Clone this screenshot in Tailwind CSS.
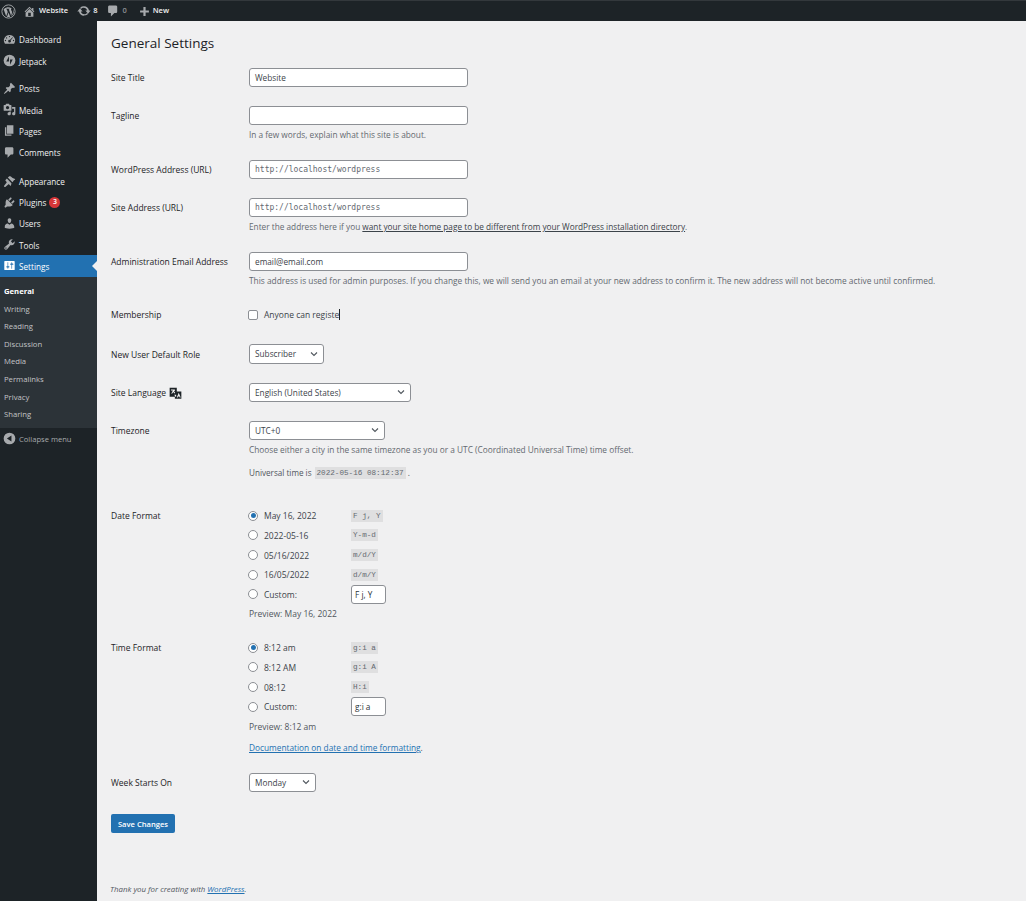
<!DOCTYPE html>
<html><head><meta charset="utf-8"><title>General Settings</title>
<script src="https://cdn.jsdelivr.net/npm/@tailwindcss/browser@4"></script></head>
<body class="bg-[#f0f0f1] font-['Open_Sans','Noto_Sans',sans-serif] text-[8.5px] text-[#3c434a] overflow-hidden">
<div class="relative w-[1026px] h-[901px] overflow-hidden">
<header class="flex h-[21px] items-center bg-[#1d2327] text-[#f0f0f1] border-t border-[#33383c] text-[7.5px] font-semibold">
  <svg class="ml-[1px] w-[15px] h-[15px]" viewBox="0 0 20 20"><circle cx="10" cy="10" r="8.8" fill="none" stroke="#a7aaad" stroke-width="1.2"/><path fill="#a7aaad" d="M3.5 7l3.4 9.3L9 10.5 7.7 7H6.8V6.3h4.6V7h-1l3 8.7 1-3.2c.5-1.6.2-2.4-.4-3.4-.5-.8-.9-1.5-.5-2.3.2-.4.5-.6.8-.7A7.400 7.400 0 0 0 3.500 7zM10 11.300 8 17.200a7.300 7.300 0 0 0 4.200-.1zM16.300 6.600c.5 2.300-.1 4.200-.9 6.400l-1.800 3.500c3-1.900 4.300-6.300 2.700-9.900z"/></svg>
  <svg class="ml-[7px] w-[13px] h-[13px]" viewBox="0 0 20 20"><path fill="#a7aaad" d="M16 8.500l1.530 1.530-1.060 1.060L10 4.620l-6.470 6.470-1.060-1.060L10 2.500l4 4v-2h2v4zm-6-2.460l6 5.990V18H4v-5.970zM12 17v-5H8v5h4z"/></svg>
  <span class="ml-[3px]">Website</span>
  <svg class="ml-[9px] w-[14px] h-[14px]" viewBox="0 0 20 20"><path fill="#a7aaad" d="M10.200 3.280c3.530 0 6.430 2.610 6.930 6h2.370l-3.750 4.500-3.750-4.500h2.580c-.47-2.280-2.500-4-4.930-4-1.600 0-3.020.75-3.940 1.910L4.600 5.280a7.040 7.040 0 0 1 5.600-2zM9.800 16.720c-3.530 0-6.430-2.610-6.930-6H.5l3.750-4.500 3.750 4.500H5.420c.47 2.280 2.500 4 4.930 4 1.600 0 3.020-.75 3.940-1.910l1.510 1.410a7.040 7.040 0 0 1-5.600 2z"/></svg>
  <span class="ml-[2px]">8</span>
  <svg class="ml-[9px] w-[14px] h-[14px]" viewBox="0 0 20 20"><path fill="#a7aaad" d="M5 2h9c1.100 0 2 .9 2 2v7c0 1.100-.9 2-2 2h-2l-5 5v-5H5c-1.100 0-2-.9-2-2V4c0-1.100.9-2 2-2z"/></svg>
  <span class="ml-[2px] text-[#8c8f94]">0</span>
  <svg class="ml-[12px] w-[11px] h-[11px]" viewBox="0 0 20 20"><path fill="#a7aaad" d="M8 2h4v6h6v4h-6v6H8v-6H2V8h6z"/></svg>
  <span class="ml-[3px]">New</span>
</header>
<div class="flex h-[880px]">
<nav class="w-[97px] shrink-0 bg-[#1d2327] text-[#f0f0f1] text-[8.2px] flex flex-col">
  <div class="flex items-center h-[21.2px] mt-[8px] pl-[3px] gap-[3px]"><svg class="w-[13px] h-[13px]" viewBox="0 0 20 20"><path fill="#a7aaad" fill-rule="evenodd" d="M10 3a8.500 8.500 0 0 0-7 13.500h14A8.500 8.500 0 0 0 10 3zM10 4.500a1 1 0 1 1 0 2 1 1 0 0 1 0-2zM5.500 6.500a1 1 0 1 1 0 2 1 1 0 0 1 0-2zM14.500 6.500l.8.600-3.600 4.400a2 2 0 1 1-1.100-.8zM3.800 10.500a1 1 0 1 1 0 2 1 1 0 0 1 0-2zM16.200 10.500a1 1 0 1 1 0 2 1 1 0 0 1 0-2z"/></svg><span class="pt-[2px]">Dashboard</span></div>
  <div class="flex items-center h-[21.2px] pl-[3px] gap-[3px]"><svg class="w-[13px] h-[13px]" viewBox="0 0 20 20"><circle cx="10" cy="10" r="9" fill="#a7aaad"/><path fill="#1d2327" d="M9.200 3.500v8H5zM10.800 8.500v8l4.200-8z"/></svg><span class="pt-[2px]">Jetpack</span></div>
  <div class="flex items-center h-[21.2px] mt-[6.5px] pl-[3px] gap-[3px]"><svg class="w-[13px] h-[13px]" viewBox="0 0 20 20"><path fill="#a7aaad" d="M10.440 3.020l1.820-1.820 6.360 6.350-1.830 1.820c-1.050-.68-2.480-.57-3.410.36l-.75.75c-.92.930-1.040 2.350-.35 3.410l-1.830 1.820-2.410-2.410-2.800 2.790c-.42.420-3.380 2.710-3.800 2.290s1.860-3.390 2.280-3.810l2.790-2.790L4.100 9.360l1.830-1.820c1.050.69 2.480.57 3.400-.36l.75-.75c.93-.92 1.050-2.350.36-3.410z"/></svg><span class="pt-[2px]">Posts</span></div>
  <div class="flex items-center h-[21.2px] pl-[3px] gap-[3px]"><svg class="w-[13px] h-[13px]" viewBox="0 0 20 20"><path fill="#a7aaad" d="M13 11V4c0-.55-.45-1-1-1h-1.670L9 1H5L3.670 3H2c-.55 0-1 .45-1 1v7c0 .55.45 1 1 1h10c.55 0 1-.45 1-1zM7 4.500c1.380 0 2.500 1.120 2.500 2.500S8.380 9.500 7 9.500 4.500 8.380 4.500 7 5.620 4.500 7 4.500zM14 6h5v10.500c0 1.380-1.120 2.500-2.500 2.500S14 17.880 14 16.500s1.120-2.500 2.500-2.500c.17 0 .34.020.5.050V9h-3V6zm-4 8.050V13h2v3.500c0 1.380-1.120 2.500-2.500 2.500S7 17.880 7 16.500 8.120 14 9.500 14c.17 0 .34.020.5.050z"/></svg><span class="pt-[2px]">Media</span></div>
  <div class="flex items-center h-[21.2px] pl-[3px] gap-[3px]"><svg class="w-[13px] h-[13px]" viewBox="0 0 20 20"><path fill="#a7aaad" d="M6 15V2h10v13H6zm-1 1h8v2H3V5h2v11z"/></svg><span class="pt-[2px]">Pages</span></div>
  <div class="flex items-center h-[21.2px] pl-[3px] gap-[3px]"><svg class="w-[13px] h-[13px]" viewBox="0 0 20 20"><path fill="#a7aaad" d="M5 2h9c1.100 0 2 .9 2 2v7c0 1.100-.9 2-2 2h-2l-5 5v-5H5c-1.100 0-2-.9-2-2V4c0-1.100.9-2 2-2z"/></svg><span class="pt-[2px]">Comments</span></div>
  <div class="flex items-center h-[21.2px] mt-[8px] pl-[3px] gap-[3px]"><svg class="w-[13px] h-[13px]" viewBox="0 0 20 20"><path fill="#a7aaad" d="M14.500 11L7.400 4l1.500-1.500c.5-.6 2.300-.5 3.500.3 1.200.8 1.400 1.300 2.700 2 1.200.7 1.900.8 2.700 1 .8.1 1.500 1 .5 1.500-1 .5-2 1.400-2 1.400zM13 12.500L6 5.500 3.900 7.600c-.4.4-.4 1 0 1.400l1.400 1.400c.5.5.5 1.100.1 1.500L2 16c-.6.7-.6 1.400 0 2s1.300.6 2 0l4-3.400c.4-.4 1-.4 1.500.1l1.400 1.400c.4.4 1 .4 1.400 0z"/></svg><span class="pt-[2px]">Appearance</span></div>
  <div class="flex items-center h-[21.2px] pl-[3px] gap-[3px]"><svg class="w-[13px] h-[13px]" viewBox="0 0 20 20"><path fill="#a7aaad" d="M13.110 4.360L9.870 7.600 8 5.730l3.240-3.240c.35-.34 1.050-.2 1.560.32.52.51.66 1.210.31 1.550zm-8 1.770l.91-1.120 9.010 9.010-1.190.84c-.71.71-2.630 1.160-3.820 1.160H6.140L4.900 17.260c-.59.59-1.540.59-2.120 0-.59-.58-.59-1.530 0-2.120l1.240-1.240v-3.880c0-1.130.4-3.190 1.090-3.890zm7.260 3.970l3.240-3.240c.34-.35 1.040-.21 1.550.31.52.51.66 1.210.31 1.550l-3.240 3.250z"/></svg><span class="pt-[2px]">Plugins</span><span class="flex items-center justify-center w-[11px] h-[11px] rounded-full bg-[#d63638] text-white text-[7px] font-semibold">3</span></div>
  <div class="flex items-center h-[21.2px] pl-[3px] gap-[3px]"><svg class="w-[13px] h-[13px]" viewBox="0 0 20 20"><path fill="#a7aaad" d="M10 9.250c-2.270 0-2.730-3.440-2.730-3.440C7 4.020 7.820 2 9.970 2c2.160 0 2.980 2.020 2.710 3.810 0 0-.41 3.440-2.680 3.440zm0 2.570L12.720 10c2.390 0 4.520 2.330 4.520 4.530v2.490s-3.650 1.130-7.240 1.130c-3.650 0-7.240-1.130-7.240-1.130v-2.490c0-2.250 1.940-4.480 4.470-4.480z"/></svg><span class="pt-[2px]">Users</span></div>
  <div class="flex items-center h-[21.2px] pl-[3px] gap-[3px]"><svg class="w-[13px] h-[13px]" viewBox="0 0 20 20"><path fill="#a7aaad" d="M16.680 9.770c-1.340 1.340-3.300 1.670-4.950.99l-5.410 6.520c-.99.99-2.590.99-3.580 0s-.99-2.590 0-3.580l6.520-5.420c-.68-1.650-.35-3.610.99-4.950 1.280-1.280 3.120-1.620 4.720-1.060l-2.890 2.890 2.820 2.820 2.860-2.870c.53 1.580.18 3.400-1.080 4.660zM3.810 16.210c.4.39 1.030.39 1.420 0 .4-.4.4-1.030 0-1.430-.39-.39-1.020-.39-1.420 0-.39.4-.39 1.030 0 1.430z"/></svg><span class="pt-[2px]">Tools</span></div>
  <div class="relative flex items-center h-[21.2px] pl-[3px] gap-[3px] bg-[#2271b1] text-white"><svg class="w-[13px] h-[13px]" viewBox="0 0 20 20"><path fill="#fff" d="M18 16V4c0-.55-.45-1-1-1H3c-.55 0-1 .45-1 1v12c0 .55.45 1 1 1h14c.55 0 1-.45 1-1zM8 11h1c.55 0 1 .45 1 1s-.45 1-1 1H8v1.500c0 .28-.22.5-.5.5s-.5-.22-.5-.5V13H6c-.55 0-1-.45-1-1s.45-1 1-1h1V5.500c0-.28.22-.5.5-.5s.5.22.5.5V11zm5-2h-1c-.55 0-1-.45-1-1s.45-1 1-1h1V5.500c0-.28.22-.5.5-.5s.5.22.5.5V7h1c.55 0 1 .45 1 1s-.45 1-1 1h-1v5.500c0 .28-.22.5-.5.5s-.5-.22-.5-.5V9z"/></svg><span class="pt-[2px]">Settings</span><span class="absolute right-0 top-[6px] w-0 h-0 border-y-[5px] border-y-transparent border-r-[5px] border-r-[#f0f0f1]"></span></div>
  <div class="flex flex-col bg-[#2c3338] text-[#c3c4c7] text-[7.7px] pt-[6.5px] pb-[4.5px] pl-[4px] leading-[17.600px]">
    <span class="font-bold text-white">General</span><span>Writing</span><span>Reading</span><span>Discussion</span><span>Media</span><span>Permalinks</span><span>Privacy</span><span>Sharing</span>
  </div>
  <div class="flex items-center h-[21px] pl-[3px] gap-[3px] text-[#a7aaad] text-[7.6px]"><svg class="w-[13px] h-[13px]" viewBox="0 0 20 20"><path fill="#a7aaad" fill-rule="evenodd" d="M10 1a9 9 0 1 1 0 18 9 9 0 0 1 0-18zM13 5.500l-7 4.500 7 4.500z"/></svg><span class="pt-[2px]">Collapse menu</span></div>
</nav>
<main class="relative flex-1 pl-[14px]">
  <h1 class="text-[13.500px] leading-[18px] text-[#1d2327] mt-[13px]">General Settings</h1>
  <form>
    <div class="flex h-[19px] items-center mt-[16px]"><label class="w-[138px] pt-[2px] text-[#1d2327]">Site Title</label><div class="w-[219px] h-[19px] bg-white border border-[#8c8f94] rounded-[3px] px-[5px] leading-[17px] text-[8.25px]">Website</div></div>
    <div class="flex h-[19px] items-center mt-[19px]"><label class="w-[138px] pt-[2px] text-[#1d2327]">Tagline</label><div class="w-[219px] h-[19px] bg-white border border-[#8c8f94] rounded-[3px]"></div></div>
    <p class="ml-[138px] mt-[3px] leading-[13px] text-[#646970] text-[8.3px]">In a few words, explain what this site is about.</p>
    <div class="flex h-[19px] items-center mt-[19px]"><label class="w-[138px] pt-[2px] text-[#1d2327]">WordPress Address (URL)</label><div class="w-[219px] h-[19px] bg-white border border-[#8c8f94] rounded-[3px] px-[5px] leading-[17px] font-['DejaVu_Sans_Mono',monospace] text-[8px] text-[#646970]">http://localhost/wordpress</div></div>
    <div class="flex h-[19px] items-center mt-[19px]"><label class="w-[138px] pt-[2px] text-[#1d2327]">Site Address (URL)</label><div class="w-[219px] h-[19px] bg-white border border-[#8c8f94] rounded-[3px] px-[5px] leading-[17px] font-['DejaVu_Sans_Mono',monospace] text-[8px] text-[#646970]">http://localhost/wordpress</div></div>
    <p class="ml-[138px] mt-[3px] leading-[13px] text-[#646970] text-[8.25px]">Enter the address here if you <a class="underline text-[#3c434a]">want your site home page to be different from your WordPress installation directory</a>.</p>
    <div class="flex h-[19px] items-center mt-[19px]"><label class="w-[138px] pt-[2px] text-[#1d2327]">Administration Email Address</label><div class="w-[219px] h-[19px] bg-white border border-[#8c8f94] rounded-[3px] px-[5px] leading-[17px] text-[8.25px]">email@email.com</div></div>
    <p class="ml-[138px] mt-[3px] leading-[13px] text-[#646970] text-[8.36px]">This address is used for admin purposes. If you change this, we will send you an email at your new address to confirm it. The new address will not become active until confirmed.</p>
    <div class="flex h-[13px] items-center mt-[21px]"><label class="w-[138px] pt-[2px] text-[#1d2327]">Membership</label><span class="-ml-[1px] w-[10px] h-[10px] bg-white border border-[#8c8f94] rounded-[2px]"></span><span class="ml-[6px] pt-[2px]">Anyone can registe</span><span class="w-[1px] h-[11px] bg-[#1d2327]"></span></div>
    <div class="flex h-[20px] items-center mt-[23px]"><label class="w-[138px] pt-[2px] text-[#1d2327]">New User Default Role</label><div class="relative w-[75px] h-[20px] bg-white border border-[#8c8f94] rounded-[3px] px-[5px] leading-[17px] text-[8.25px]">Subscriber<svg class="absolute right-[5px] top-[6px] w-[8px] h-[6px]" viewBox="0 0 8 6"><path d="M1 1.500l3 3 3-3" fill="none" stroke="#50575e" stroke-width="1.100"/></svg></div></div>
    <div class="flex h-[19px] items-center mt-[19px]"><label class="w-[138px] pt-[2px] text-[#1d2327] flex items-center gap-[3px]">Site Language<svg class="w-[13px] h-[13px]" viewBox="0 0 20 20"><path fill="#1d2327" d="M1 1h11v11H8l2 3H1zM3 4v1.500h3L3.500 10l1.200.5 1.800-3 2 2.500 1-1L7.500 6h1.500V4z"/><path fill="#1d2327" fill-rule="evenodd" d="M11 7h8v11H9v-3h2zM15 9l-3 7h1.500l.5-1.500h2l.5 1.500h1.500z"/></svg></label><div class="relative w-[162px] h-[19px] bg-white border border-[#8c8f94] rounded-[3px] px-[5px] leading-[17px] text-[8.25px]">English (United States)<svg class="absolute right-[5px] top-[5px] w-[8px] h-[6px]" viewBox="0 0 8 6"><path d="M1 1.500l3 3 3-3" fill="none" stroke="#50575e" stroke-width="1.100"/></svg></div></div>
    <div class="flex h-[19px] items-center mt-[19px]"><label class="w-[138px] pt-[2px] text-[#1d2327]">Timezone</label><div class="relative w-[136px] h-[19px] bg-white border border-[#8c8f94] rounded-[3px] px-[5px] leading-[17px] text-[8.25px]">UTC+0<svg class="absolute right-[5px] top-[5px] w-[8px] h-[6px]" viewBox="0 0 8 6"><path d="M1 1.500l3 3 3-3" fill="none" stroke="#50575e" stroke-width="1.100"/></svg></div></div>
    <p class="ml-[138px] mt-[3px] leading-[13px] text-[#646970] text-[8.3px]">Choose either a city in the same timezone as you or a UTC (Coordinated Universal Time) time offset.</p>
    <p class="ml-[138px] mt-[10px] leading-[13px] text-[#50575e] text-[8.15px] flex items-center">Universal time is <code class="ml-[3px] mr-[2px] px-[2px] h-[12px] leading-[12px] bg-black/[.07] font-['Liberation_Mono',monospace] text-[7.65px] text-[#646970]">2022-05-16 08:12:37</code> .</p>
    <div class="flex mt-[27px]"><label class="w-[138px] text-[#1d2327] leading-[19px]">Date Format</label>
      <div class="flex flex-col">
        <div class="flex h-[19.600px] items-center"><span class="-ml-[1px] w-[10px] h-[10px] rounded-full bg-white border border-[#8c8f94] flex items-center justify-center"><span class="w-[5px] h-[5px] rounded-full bg-[#2271b1]"></span></span><span class="ml-[6px] w-[87px] pt-[2px]">May 16, 2022</span><code class="px-[2px] leading-[12px] bg-black/[.07] font-['Liberation_Mono',monospace] text-[7.65px] whitespace-pre text-[#646970]">F j, Y</code></div>
        <div class="flex h-[19.600px] items-center"><span class="-ml-[1px] w-[10px] h-[10px] rounded-full bg-white border border-[#8c8f94]"></span><span class="ml-[6px] w-[87px] pt-[2px]">2022-05-16</span><code class="px-[2px] leading-[12px] bg-black/[.07] font-['Liberation_Mono',monospace] text-[7.65px] text-[#646970]">Y-m-d</code></div>
        <div class="flex h-[19.600px] items-center"><span class="-ml-[1px] w-[10px] h-[10px] rounded-full bg-white border border-[#8c8f94]"></span><span class="ml-[6px] w-[87px] pt-[2px]">05/16/2022</span><code class="px-[2px] leading-[12px] bg-black/[.07] font-['Liberation_Mono',monospace] text-[7.65px] text-[#646970]">m/d/Y</code></div>
        <div class="flex h-[19.600px] items-center"><span class="-ml-[1px] w-[10px] h-[10px] rounded-full bg-white border border-[#8c8f94]"></span><span class="ml-[6px] w-[87px] pt-[2px]">16/05/2022</span><code class="px-[2px] leading-[12px] bg-black/[.07] font-['Liberation_Mono',monospace] text-[7.65px] text-[#646970]">d/m/Y</code></div>
        <div class="flex h-[19.600px] items-center"><span class="-ml-[1px] w-[10px] h-[10px] rounded-full bg-white border border-[#8c8f94]"></span><span class="ml-[6px] w-[87px] pt-[2px]">Custom:</span><div class="w-[35px] h-[19px] bg-white border border-[#8c8f94] rounded-[3px] px-[3px] leading-[17px] text-[#2c3338] text-[8.25px]">F j, Y</div></div>
        <p class="mt-[3px] leading-[13px] text-[#50575e]">Preview: May 16, 2022</p>
      </div></div>
    <div class="flex mt-[18px]"><label class="w-[138px] text-[#1d2327] leading-[19px]">Time Format</label>
      <div class="flex flex-col">
        <div class="flex h-[19.600px] items-center"><span class="-ml-[1px] w-[10px] h-[10px] rounded-full bg-white border border-[#8c8f94] flex items-center justify-center"><span class="w-[5px] h-[5px] rounded-full bg-[#2271b1]"></span></span><span class="ml-[6px] w-[87px] pt-[2px]">8:12 am</span><code class="px-[2px] leading-[12px] bg-black/[.07] font-['Liberation_Mono',monospace] text-[7.65px] text-[#646970]">g:i a</code></div>
        <div class="flex h-[19.600px] items-center"><span class="-ml-[1px] w-[10px] h-[10px] rounded-full bg-white border border-[#8c8f94]"></span><span class="ml-[6px] w-[87px] pt-[2px]">8:12 AM</span><code class="px-[2px] leading-[12px] bg-black/[.07] font-['Liberation_Mono',monospace] text-[7.65px] text-[#646970]">g:i A</code></div>
        <div class="flex h-[19.600px] items-center"><span class="-ml-[1px] w-[10px] h-[10px] rounded-full bg-white border border-[#8c8f94]"></span><span class="ml-[6px] w-[87px] pt-[2px]">08:12</span><code class="px-[2px] leading-[12px] bg-black/[.07] font-['Liberation_Mono',monospace] text-[7.65px] text-[#646970]">H:i</code></div>
        <div class="flex h-[19.600px] items-center"><span class="-ml-[1px] w-[10px] h-[10px] rounded-full bg-white border border-[#8c8f94]"></span><span class="ml-[6px] w-[87px] pt-[2px]">Custom:</span><div class="w-[35px] h-[19px] bg-white border border-[#8c8f94] rounded-[3px] px-[3px] leading-[17px] text-[#2c3338] text-[8.25px]">g:i a</div></div>
        <p class="mt-[4px] leading-[13px] text-[#50575e]">Preview: 8:12 am</p>
        <p class="mt-[8px] leading-[13px] text-[#50575e] text-[8.3px]"><a class="underline text-[#2271b1]">Documentation on date and time formatting</a>.</p>
      </div></div>
    <div class="flex h-[19px] items-center mt-[19px]"><label class="w-[138px] pt-[2px] text-[#1d2327]">Week Starts On</label><div class="relative w-[67px] h-[19px] bg-white border border-[#8c8f94] rounded-[3px] px-[5px] leading-[17px] text-[8.25px]">Monday<svg class="absolute right-[5px] top-[5px] w-[8px] h-[6px]" viewBox="0 0 8 6"><path d="M1 1.500l3 3 3-3" fill="none" stroke="#50575e" stroke-width="1.100"/></svg></div></div>
    <button type="button" class="block mt-[22px] w-[64px] h-[19px] pt-[1px] bg-[#2271b1] text-white rounded-[2px] font-semibold text-[7.6px]">Save Changes</button>
  </form>
  <p class="absolute left-[13px] top-[863px] italic text-[#50575e] text-[7.9px]">Thank you for creating with <a class="underline text-[#2271b1]">WordPress</a>.</p>
</main>
</div>
</div>
</body></html>
